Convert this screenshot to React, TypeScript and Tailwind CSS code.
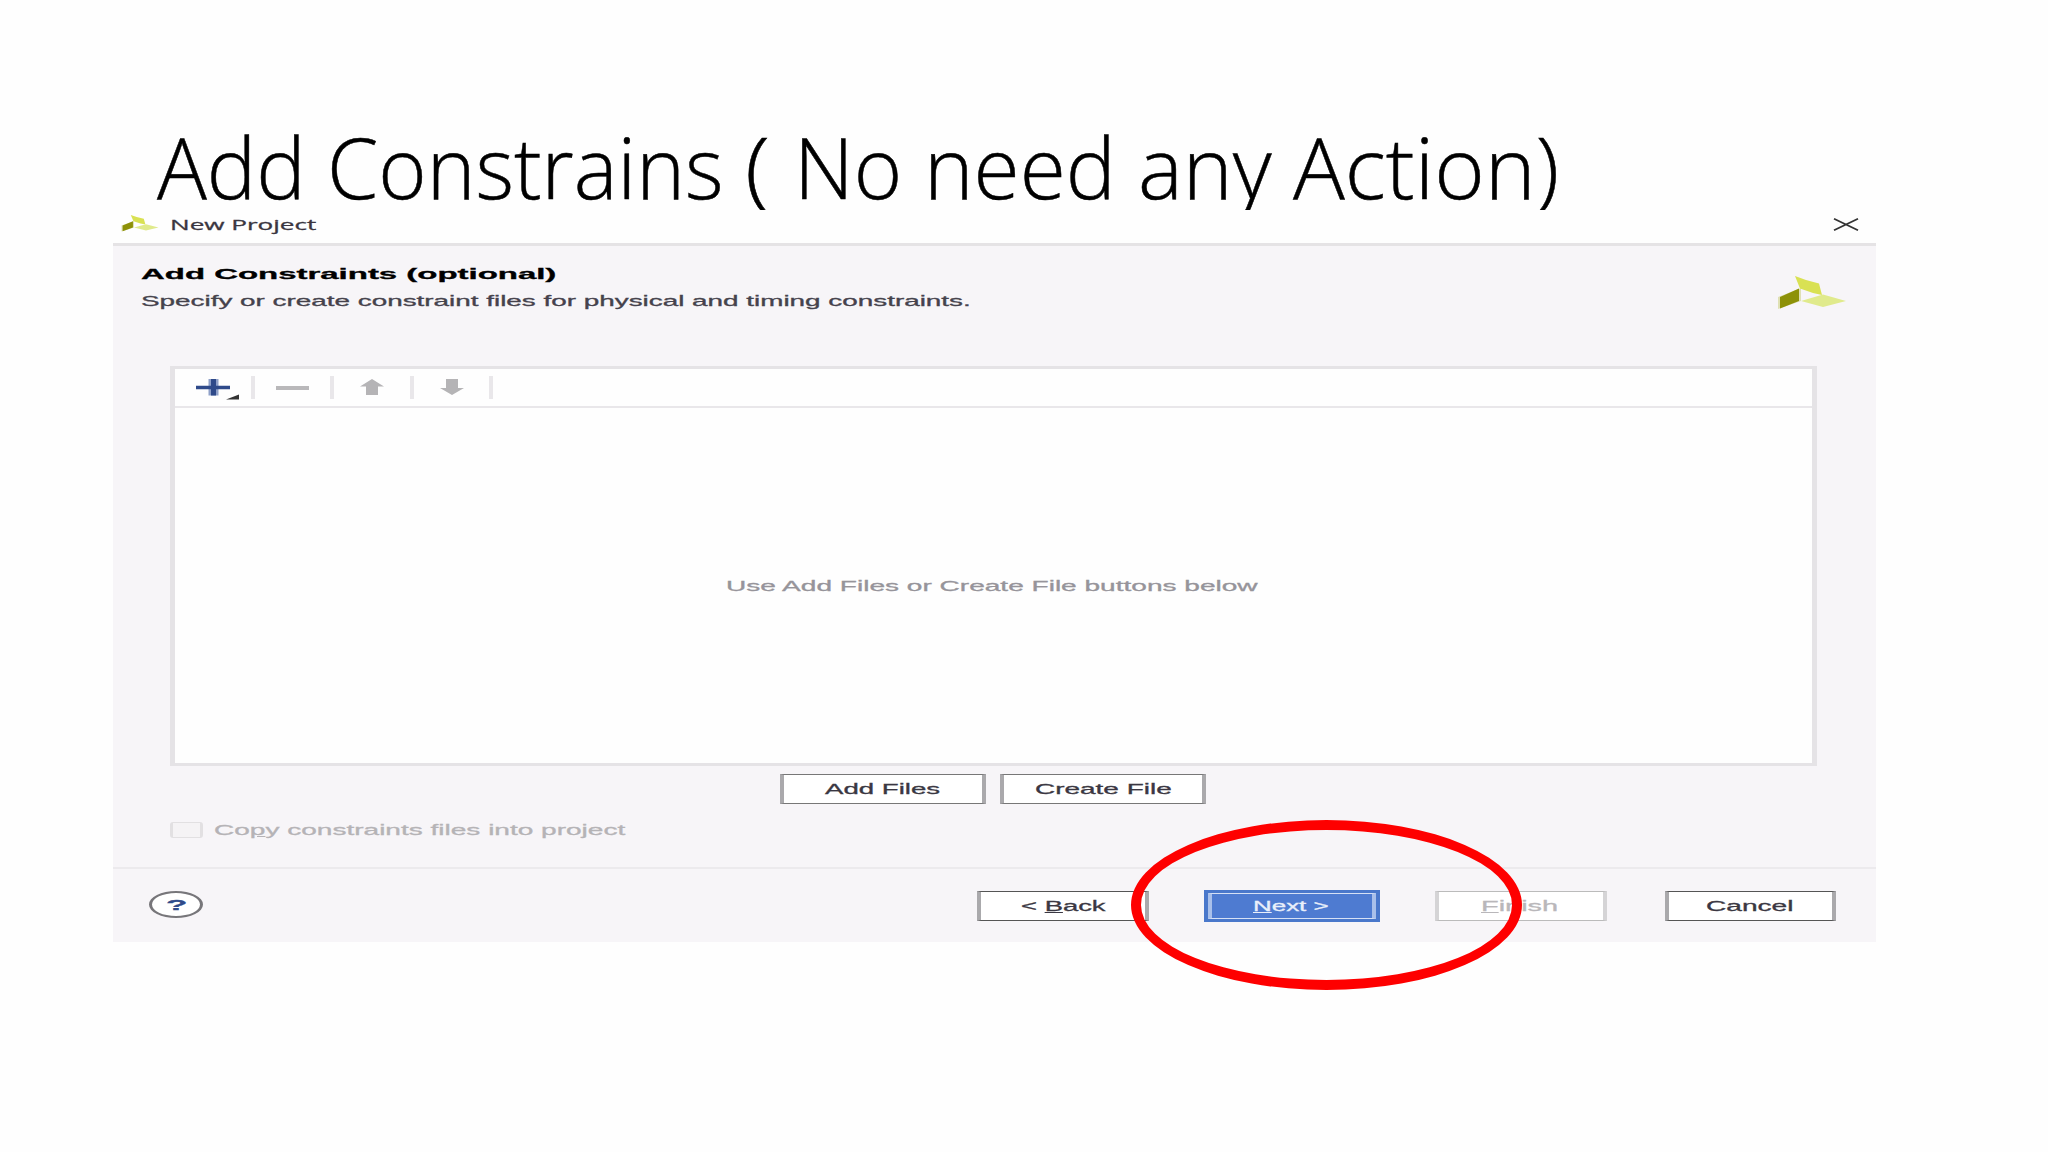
import { useLayoutEffect, useRef, useState, type ReactNode } from 'react';

type StretchedProps = {
  width: number;
  className?: string;
  children: ReactNode;
};

// Text scaled horizontally until it fills the given width
const Stretched = ({ width, className = '', children }: StretchedProps) => {
  const ref = useRef<HTMLSpanElement>(null);
  const [scale, setScale] = useState(1);

  useLayoutEffect(() => {
    if (ref.current) setScale(width / ref.current.offsetWidth);
  }, [width]);

  return (
    <span className={`block shrink-0 ${className}`} style={{ width }}>
      <span
        ref={ref}
        className="inline-block origin-left whitespace-pre"
        style={{ transform: `scaleX(${scale})` }}
      >
        {children}
      </span>
    </span>
  );
};

const titleWords = [
  { text: 'Add ', width: 170 },
  { text: 'Constrains ', width: 418 },
  { text: '( ', width: 49 },
  { text: 'No ', width: 130 },
  { text: 'need ', width: 214 },
  { text: 'any ', width: 155 },
  { text: 'Action)', width: 266 },
];

const Logo = ({ className }: { className: string }) => (
  <svg viewBox="0 0 70 34" preserveAspectRatio="none" className={className}>
    <path d="M1 21 24 12V25L1 33Z" fill="#dfe0b4" />
    <path d="M3 21 22 12.500V25L3 32.500Z" fill="#8d9108" />
    <path d="M18 0Q30 5 42 7.500L45 19 36 17 23 12.500Z" fill="#d9e153" />
    <path d="M24 25 46 18.500 69 25 46 31Z" fill="#e0ea8c" />
  </svg>
);

type DialogButtonProps = {
  textWidth: number;
  className: string;
  disabled?: boolean;
  children: ReactNode;
};

const DialogButton = ({ textWidth, className, disabled, children }: DialogButtonProps) => (
  <button
    type="button"
    disabled={disabled}
    className={`flex shrink-0 items-center justify-center border-x-4 border-y bg-white ${className}`}
  >
    <Stretched width={textWidth} className="text-left">
      {children}
    </Stretched>
  </button>
);

const Separator = () => <div className="h-[23px] w-1 shrink-0 bg-[#e9e7ea]" />;

const Toolbar = () => (
  <div className="flex h-[39px] items-center border-b-2 border-[#e9e7ea]">
    <svg className="ml-[20px] h-[24px] w-[46px]" viewBox="0 0 46 24">
      <path d="M18.500 3V19.500" stroke="#8fa0c8" strokeWidth="10" />
      <path d="M18.500 3V19.500" stroke="#2f4a8a" strokeWidth="5" />
      <path d="M1 11.500H35" stroke="#2f4a8a" strokeWidth="3.500" />
      <path d="M31 23.500 44 18.500V23.500Z" fill="#333" />
    </svg>
    <div className="ml-[10px] flex items-center">
      <Separator />
      <div className="flex w-[75px] justify-center">
        <div className="h-1 w-[33px] bg-[#b9b8ba]" />
      </div>
      <Separator />
      <div className="flex w-[76px] justify-center">
        <svg className="h-[17px] w-[24px]" viewBox="0 0 24 17">
          <path d="M12 0 24 7.500H18V16H6V7.500H0Z" fill="#b5b4b6" />
        </svg>
      </div>
      <Separator />
      <div className="flex w-[75px] justify-center">
        <svg className="h-[17px] w-[24px]" viewBox="0 0 24 17">
          <path d="M12 16 24 9H18V0H6V9H0Z" fill="#b5b4b6" />
        </svg>
      </div>
      <Separator />
    </div>
  </div>
);

const App = () => (
  <main className="h-[1152px] w-[2048px] overflow-hidden bg-[#fefefe] font-['Liberation_Sans',Arial,sans-serif] text-[15px] leading-[18px]">
    <h1 className="flex h-[210px] pt-[117px] pl-[157px] font-['Open_Sans',sans-serif] text-[84px] leading-[100px] font-light text-black [-webkit-text-stroke:0.5px_currentColor]">
      {titleWords.map(word => (
        <Stretched key={word.text} width={word.width}>
          {word.text}
        </Stretched>
      ))}
    </h1>

    <section className="relative ml-[113px] w-[1763px] [-webkit-text-stroke:0.3px_currentColor]">
      <header className="flex h-[33px] items-start bg-[#fefefe]">
        <Logo className="mt-[5px] ml-[8px] h-[17px] w-[38px]" />
        <Stretched
          width={146}
          className="mt-[5px] ml-[11px] font-['Open_Sans',sans-serif] text-[#3a3540]"
        >
          New Project
        </Stretched>
        <svg
          className="mt-[8px] mr-[17px] ml-auto h-[13px] w-[26px]"
          viewBox="0 0 26 13"
          fill="none"
          stroke="#333"
          strokeWidth="1.800"
        >
          <path d="M1 .8 25 12.200M25 .8 1 12.200" />
        </svg>
      </header>

      <div className="flex h-[123px] border-t-[3px] border-[#e5e3e5] bg-[#f7f5f8]">
        <div className="pt-[19px] pl-[28px]">
          <Stretched width={415} className="font-bold text-black">
            Add Constraints (optional)
          </Stretched>
          <Stretched width={830} className="mt-[9px] text-[#45424c]">
            Specify or create constraint files for physical and timing constraints.
          </Stretched>
        </div>
        <Logo className="mt-[30px] mr-[29px] ml-auto h-[34px] w-[70px]" />
      </div>

      <div className="h-[501px] bg-[#f7f5f8] pl-[57px]">
        <div className="h-[400px] w-[1647px] border-x-[5px] border-y-[3px] border-[#e5e3e6] bg-[#fefefe]">
          <Toolbar />
          <div className="flex h-[355px] justify-center pt-[169px] pr-[4px]">
            <Stretched width={531} className="text-[#96949a]">
              Use Add Files or Create File buttons below
            </Stretched>
          </div>
        </div>

        <div className="mt-[8px] ml-[610px] flex gap-[14px] text-[#3a3742]">
          <DialogButton textWidth={116} className="h-[30px] w-[206px] border-x-[#aaa9ac] border-y-[#777]">
            Add Files
          </DialogButton>
          <DialogButton textWidth={136} className="h-[30px] w-[206px] border-x-[#aaa9ac] border-y-[#777]">
            Create File
          </DialogButton>
        </div>

        <label className="mt-[17px] flex items-center text-[#b5b3b6]">
          <span className="h-[16px] w-[33px] rounded-[3px] border-x-[3px] border-y border-[#e2e0e2] bg-[#f5f3f5]" />
          <Stretched width={411} className="ml-[11px]">
            Co<u>p</u>y constraints files into project
          </Stretched>
        </label>
      </div>

      <footer className="flex h-[75px] items-start border-t-2 border-[#eceaed] bg-[#f7f5f8] pt-[22px] pl-[36px] text-[#3a3742]">
        <div className="flex h-[27px] w-[54px] items-center justify-center rounded-[50%] border-x-[3px] border-y-2 border-[#77767a] bg-white font-bold text-[#2f4a8a]">
          <Stretched width={21}>?</Stretched>
        </div>
        <DialogButton textWidth={84} className="ml-[774px] h-[30px] w-[172px] border-x-[#aaa9ac] border-y-[#555]">
          &lt; <u>B</u>ack
        </DialogButton>
        <button
          type="button"
          className="mt-[-1px] ml-[55px] h-[32px] w-[176px] border-x-4 border-y-[3px] border-[#4a78cb] bg-white"
        >
          <span className="flex h-full items-center justify-center border-x-4 border-y border-x-[#a9c0ea] border-y-[#d5e0f5] bg-[#4e7bd1] pr-[3px] text-[#e9effa]">
            <Stretched width={76} className="text-left">
              <u>N</u>ext &gt;
            </Stretched>
          </span>
        </button>
        <DialogButton
          disabled
          textWidth={77}
          className="ml-[55px] h-[30px] w-[172px] border-x-[#d5d4d6] border-y-[#bbb] pr-[3px] text-[#b9b7ba]"
        >
          <u>F</u>inish
        </DialogButton>
        <DialogButton textWidth={88} className="ml-[58px] h-[30px] w-[171px] border-x-[#aaa9ac] border-y-[#555] pr-[2px]">
          Cancel
        </DialogButton>
      </footer>

      {/* highlight around the Next button */}
      <div className="absolute top-[610px] left-[1018px] h-[170px] w-[391px] rounded-[50%] border-[10px] border-[#fe0000]" />
    </section>
  </main>
);

export default App;
